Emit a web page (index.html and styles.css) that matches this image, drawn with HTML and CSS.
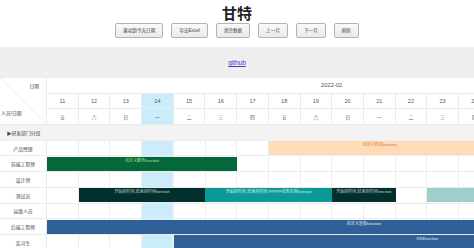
FILE: index.html
```html
<!DOCTYPE html>
<html lang="zh">
<head>
<meta charset="utf-8">
<title>甘特</title>
<link rel="stylesheet" href="styles.css">
</head>
<body>
<h1 class="title">甘特</h1>
<div class="toolbar">
  <button class="btn">滚动到今天日期</button>
  <button class="btn">导出Excel</button>
  <button class="btn">清空数据</button>
  <button class="btn">上一月</button>
  <button class="btn">下一月</button>
  <button class="btn">刷新</button>
</div>
<div class="banner"><a href="#">github</a></div>

<div class="gantt">
  <div class="head">
    <div class="corner"><span class="corner-top">日期</span><span class="corner-bottom">人员/日期</span></div>
    <div class="month" style="grid-column: span 18">2022-02</div>
    <div class="month" style="grid-column: span 6">2022-03</div>
    <div class="day">11</div><div class="day">12</div><div class="day">13</div><div class="day today">14</div><div class="day">15</div><div class="day">16</div><div class="day">17</div><div class="day">18</div><div class="day">19</div><div class="day">20</div><div class="day">21</div><div class="day">22</div><div class="day">23</div><div class="day">24</div><div class="day">25</div><div class="day">26</div><div class="day">27</div><div class="day">28</div><div class="day">1</div><div class="day">2</div><div class="day">3</div><div class="day">4</div><div class="day">5</div><div class="day">6</div>
    <div class="week">五</div><div class="week">六</div><div class="week">日</div><div class="week today">一</div><div class="week">二</div><div class="week">三</div><div class="week">四</div><div class="week">五</div><div class="week">六</div><div class="week">日</div><div class="week">一</div><div class="week">二</div><div class="week">三</div><div class="week">四</div><div class="week">五</div><div class="week">六</div><div class="week">日</div><div class="week">一</div><div class="week">二</div><div class="week">三</div><div class="week">四</div><div class="week">五</div><div class="week">六</div><div class="week">日</div>
  </div>

  <div class="row group"><div class="label">▶研发部门分组</div></div>
  <div class="row"><div class="label">产品经理</div>
    <div class="bar orange" style="grid-column: 9 / span 7">自定义样式function</div>
  </div>
  <div class="row"><div class="label">前端工程师</div>
    <div class="bar green" style="grid-column: 2 / span 6">自定义颜色function</div>
  </div>
  <div class="row"><div class="label">设计师</div></div>
  <div class="row"><div class="label">测试员</div>
    <div class="bar dark" style="grid-column: 3 / span 4">开始的时间-结束的时间function</div>
    <div class="bar teal" style="grid-column: 7 / span 4">开始的时间-结束的时间-PPPPP任务名称function</div>
    <div class="bar dark" style="grid-column: 11 / span 2">开始的时间-结束的时间function</div>
    <div class="bar light" style="grid-column: 14 / span 3"></div>
  </div>
  <div class="row"><div class="label">运维人员</div></div>
  <div class="row"><div class="label">后端工程师</div>
    <div class="bar blue" style="grid-column: 2 / span 20">自定义渲染function</div>
  </div>
  <div class="row"><div class="label">实习生</div>
    <div class="bar blue" style="grid-column: 6 / span 16">SSSfunction</div>
  </div>
</div>
</body>
</html>
```
FILE: styles.css
```css
* { box-sizing: border-box; }
html, body { margin: 0; padding: 0; }
body {
  width: 474px;
  height: 248px;
  overflow: hidden;
  background: #fff;
  font-family: "Liberation Sans", "Noto Sans CJK SC", sans-serif;
  color: #555;
}
.title {
  margin: 6px 0 0;
  text-align: center;
  font-size: 15px;
  line-height: 16px;
  font-weight: bold;
  color: #222;
}
.toolbar {
  display: flex;
  justify-content: center;
  gap: 8px;
  margin-top: 1px;
}
.btn {
  height: 15px;
  padding: 0 7px;
  font-family: "Liberation Sans", "Noto Sans CJK SC", sans-serif;
  font-size: 4.6px;
  line-height: 13px;
  color: #444;
  background: linear-gradient(#fafafa, #e9e9e9);
  border: 1px solid #b3b3b3;
  border-radius: 2px;
}
.banner {
  margin-top: 9px;
  height: 31px;
  background: #efefef;
  display: flex;
  align-items: center;
  justify-content: center;
}
.banner a {
  font-size: 6.5px;
  color: #3a3acf;
  text-decoration: underline;
}

.gantt {
  width: max-content;
  color: #555;
}
.head {
  display: grid;
  grid-template-columns: 47px repeat(24, 31.7px);
  grid-template-rows: repeat(3, 15.7px);
}
.corner {
  grid-row: 1 / span 3;
  display: flex;
  flex-direction: column;
  justify-content: space-between;
  padding: 6px 7px 7px 1px;
  font-size: 4.8px;
  line-height: 6px;
  color: #444;
  border-right: 1px solid #ebebeb;
  border-bottom: 1px solid #ebebeb;
  background: linear-gradient(to top right, transparent calc(50% - 0.4px), #ececec 50%, transparent calc(50% + 0.4px));
}
.corner-top { align-self: flex-end; }
.corner-bottom { align-self: flex-start; }
.month, .day, .week {
  display: flex;
  align-items: center;
  justify-content: center;
  border-right: 1px solid #ebebeb;
  border-bottom: 1px solid #ebebeb;
}
.month { font-size: 5.8px; color: #555; }
.day { font-size: 5.5px; }
.week { font-size: 4.8px; }
.today { background: #caecfb; }

.row {
  display: grid;
  grid-template-columns: 47px repeat(24, 31.7px);
  height: 15.7px;
  border-bottom: 1px solid #ececec;
  background-image:
    linear-gradient(#caecfb, #caecfb),
    repeating-linear-gradient(to right, transparent 0 30.7px, #ededed 30.7px 31.7px);
  background-position: 142.1px 0, 47px 0;
  background-size: 30.7px 100%, 100% 100%;
  background-repeat: no-repeat, no-repeat;
}
.row.group {
  background: #f3f3f3;
}
.label {
  grid-column: 1;
  grid-row: 1;
  display: flex;
  align-items: center;
  justify-content: center;
  font-size: 4.8px;
  color: #444;
  background: #fff;
  border-right: 1px solid #ebebeb;
  white-space: nowrap;
}
.group .label {
  background: transparent;
  border-right: none;
}
.bar {
  grid-row: 1;
  margin-top: 0.5px;
  height: 14px;
  font-size: 4px;
  line-height: 8px;
  text-align: center;
  white-space: nowrap;
  overflow: hidden;
}
.orange { background: #ffdcb6; color: #f0643a; }
.green { background: #05673a; color: #b9e08c; }
.dark { background: #032f2d; color: #c3d6d5; }
.teal { background: #0b9a97; color: #d6f3f2; }
.light { background: #9fcfcb; }
.blue { background: #2f6097; color: #e3ecf7; }
```
